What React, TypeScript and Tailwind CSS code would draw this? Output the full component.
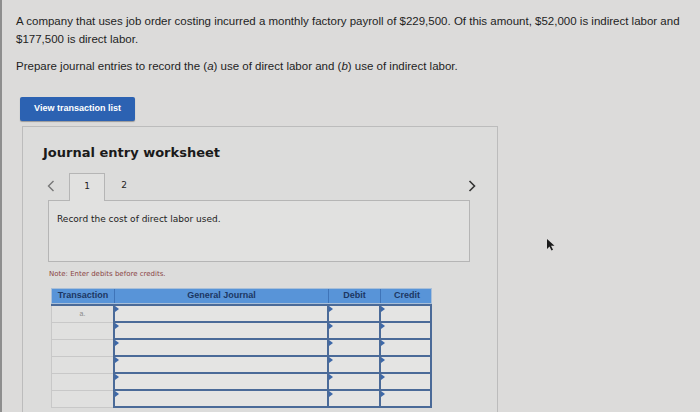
import React from "react";

const ROWS = ["a.", "", "", "", "", ""];

function Caret() {
  return (
    <span className="absolute left-0 top-0 h-0 w-0 border-y-[3px] border-l-[4px] border-y-transparent border-l-[#3d68a8]" />
  );
}

function InputCell({ last }: { last?: boolean }) {
  return (
    <div
      className={`relative h-[17px] border-b-2 border-l-2 border-[#4a6a98] bg-[#e4e4e3] ${
        last ? "border-r-2" : ""
      }`}
    >
      <Caret />
    </div>
  );
}

function JournalTable() {
  return (
    <div className="w-[381px] font-['Liberation_Sans',Arial,sans-serif]">
      <div className="grid grid-cols-[62px_214px_52px_53px] border border-[#a9bfd8] bg-[#5894d8] text-[9px] font-bold text-[#1c3763]">
        <div className="flex h-[14px] items-center justify-center">Transaction</div>
        <div className="flex h-[14px] items-center justify-center border-l border-[#3f74b8]">General Journal</div>
        <div className="flex h-[14px] items-center justify-center border-l border-[#3f74b8]">Debit</div>
        <div className="flex h-[14px] items-center justify-center border-l border-[#3f74b8]">Credit</div>
      </div>
      <div className="grid grid-cols-[62px_214px_52px_53px] border-t-2 border-[#4a6a98]">
        {ROWS.map((label, i) => (
          <React.Fragment key={i}>
            <div className="flex h-[17px] items-center justify-center border-b border-l border-[#c8c8c8] bg-[#e0e0df] text-[7px] text-[#8a8a8a]">
              {label}
            </div>
            <InputCell />
            <InputCell />
            <InputCell last />
          </React.Fragment>
        ))}
      </div>
    </div>
  );
}

export default function App() {
  return (
    <div className="relative h-[412px] w-[700px] overflow-hidden border-l-2 border-[#8e8e8e] bg-[#dcdbda] text-[#1e1e1e]">
      <div className="pl-[14px] pt-[12px] font-['Liberation_Sans',Arial,sans-serif] text-[11.5px] leading-[18px]">
        <p className="whitespace-nowrap">
          A company that uses job order costing incurred a monthly factory payroll of $229,500. Of this amount, $52,000 is indirect labor and
          <br />
          $177,500 is direct labor.
        </p>
        <p className="mt-[9px]">
          Prepare journal entries to record the (<i>a</i>) use of direct labor and (<i>b</i>) use of indirect labor.
        </p>
      </div>

      <div className="ml-[18px] mt-[22px] flex">
        <button className="h-[24px] w-[115px] rounded-[2px] bg-[#2c62b2] font-['Liberation_Sans',Arial,sans-serif] text-[9px] font-bold text-white shadow-[0_1px_1px_rgba(0,0,0,0.3)]">
          View transaction list
        </button>
      </div>

      <div className="ml-[20px] mt-[5px] h-[300px] w-[476px] border border-[#bcbcbc] bg-[#dcdcdb] pl-[20px] pt-[16px] font-['DejaVu_Sans',Verdana,sans-serif]">
        <h2 className="text-[13px] font-bold text-[#1a1a1a]">Journal entry worksheet</h2>

        <div className="mt-[10px] flex h-[27px] items-stretch pr-[20px]">
          <div className="flex w-[26px] items-center justify-start pl-[4px] text-[#777]">
            <svg width="8" height="12" viewBox="0 0 8 12" fill="none" stroke="currentColor" strokeWidth="1.4">
              <path d="M6.5 1 L1.5 6 L6.5 11" />
            </svg>
          </div>
          <div className="relative z-10 -mb-px flex w-[36px] items-center justify-center border border-b-0 border-[#b5b5b5] bg-[#e1e1e0] text-[9px] text-[#222]">
            1
          </div>
          <div className="flex w-[38px] items-center justify-center text-[9px] text-[#222]">2</div>
          <div className="flex-1" />
          <div className="flex w-[10px] items-center justify-center text-[#333]">
            <svg width="8" height="12" viewBox="0 0 8 12" fill="none" stroke="currentColor" strokeWidth="1.6">
              <path d="M1.5 1 L6.5 6 L1.5 11" />
            </svg>
          </div>
        </div>

        <div className="ml-[5px] h-[62px] w-[422px] border border-[#b5b5b5] bg-[#e1e1e0] pl-[8px] pt-[12px] text-[9px] text-[#222]">
          Record the cost of direct labor used.
        </div>

        <p className="ml-[6px] mt-[7px] text-[7px] text-[#8a4545]">Note: Enter debits before credits.</p>

        <div className="ml-[8px] mt-[9px]">
          <JournalTable />
        </div>
      </div>

      <svg className="absolute left-[544px] top-[238px]" width="9" height="13" viewBox="0 0 9 13">
        <path d="M1 1 L1 11 L3.5 8.5 L5.5 12.5 L7 11.8 L5 7.8 L8.5 7.8 Z" fill="#1b1b1b" />
      </svg>
    </div>
  );
}
